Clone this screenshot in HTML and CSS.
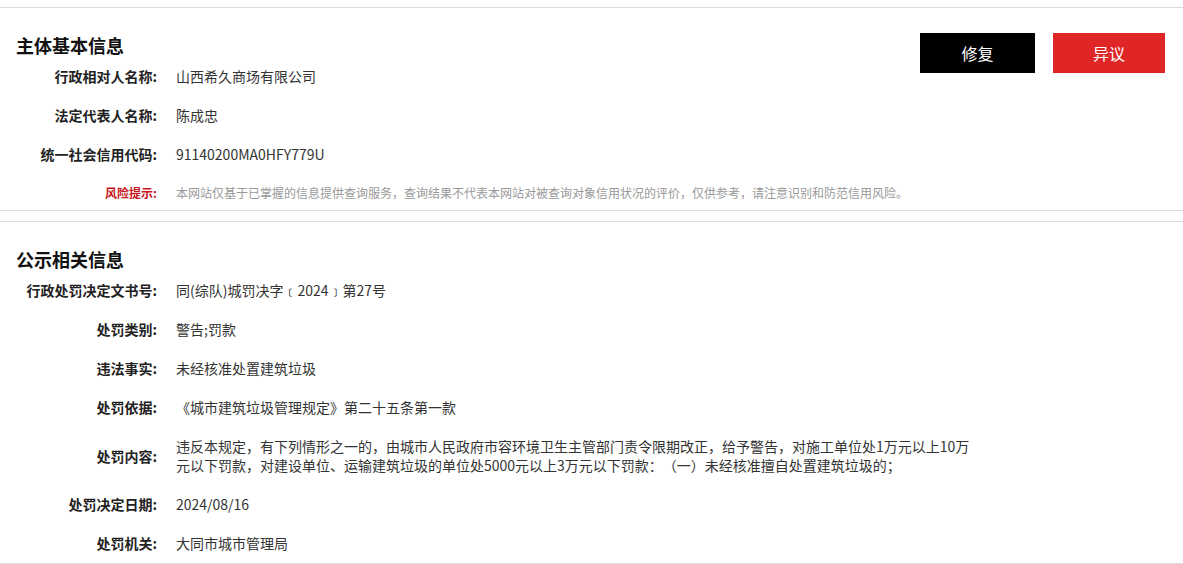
FILE: index.html
```html
<!DOCTYPE html>
<html lang="zh-CN">
<head>
<meta charset="utf-8">
<title>主体基本信息</title>
<link rel="stylesheet" href="styles.css">
</head>
<body>
<div class="page">
  <section class="section section-main">
    <div class="info">
      <h2 class="title">主体基本信息</h2>
      <div class="row"><div class="label">行政相对人名称:</div><div class="value">山西希久商场有限公司</div></div>
      <div class="row"><div class="label">法定代表人名称:</div><div class="value">陈成忠</div></div>
      <div class="row"><div class="label">统一社会信用代码:</div><div class="value">91140200MA0HFY779U</div></div>
      <div class="row row-risk"><div class="label label-risk">风险提示:</div><div class="value value-risk">本网站仅基于已掌握的信息提供查询服务，查询结果不代表本网站对被查询对象信用状况的评价，仅供参考，请注意识别和防范信用风险。</div></div>
    </div>
    <div class="actions">
      <button class="btn btn-dark">修复</button>
      <button class="btn btn-red">异议</button>
    </div>
  </section>
  <section class="section">
    <div class="info">
      <h2 class="title">公示相关信息</h2>
      <div class="row"><div class="label">行政处罚决定文书号:</div><div class="value">同(综队)城罚决字﹝2024﹞第27号</div></div>
      <div class="row"><div class="label">处罚类别:</div><div class="value">警告;罚款</div></div>
      <div class="row"><div class="label">违法事实:</div><div class="value">未经核准处置建筑垃圾</div></div>
      <div class="row"><div class="label">处罚依据:</div><div class="value">《城市建筑垃圾管理规定》第二十五条第一款</div></div>
      <div class="row"><div class="label">处罚内容:</div><div class="value">违反本规定，有下列情形之一的，由城市人民政府市容环境卫生主管部门责令限期改正，给予警告，对施工单位处1万元以上10万元以下罚款，对建设单位、运输建筑垃圾的单位处5000元以上3万元以下罚款：（一）未经核准擅自处置建筑垃圾的；</div></div>
      <div class="row"><div class="label">处罚决定日期:</div><div class="value">2024/08/16</div></div>
      <div class="row"><div class="label">处罚机关:</div><div class="value">大同市城市管理局</div></div>
    </div>
  </section>
</div>
</body>
</html>
```

FILE: styles.css
```css
* { box-sizing: border-box; }
html, body { margin: 0; padding: 0; background: #fff; }
body {
  font-family: "Noto Sans CJK SC", "Liberation Sans", sans-serif;
  color: #333;
  text-spacing-trim: space-all;
}
.page { padding-top: 7px; }
.section {
  border-top: 1px solid #dcdcdc;
  border-bottom: 1px solid #dcdcdc;
  padding: 0 18px 0 16px;
  display: flex;
  justify-content: space-between;
  align-items: flex-start;
}
.section + .section { margin-top: 10px; }
.info { flex: 1; }
.title {
  margin: 0;
  padding-top: 25px;
  font-size: 18px;
  line-height: 24px;
  font-weight: bold;
  color: #111;
}
.row {
  display: flex;
  align-items: center;
  padding: 10px 0;
  font-size: 14px;
  line-height: 19px;
}
.label {
  width: 141px;
  flex: none;
  text-align: right;
  font-weight: bold;
  color: #222;
}
.value {
  margin-left: 19px;
  max-width: 800px;
  color: #333;
}
.row-risk { padding: 9px 0 8px; font-size: 12px; }
.label-risk { color: #c8161d; font-weight: bold; }
.value-risk { color: #999; }
.actions {
  display: flex;
  gap: 18px;
  padding-top: 25px;
}
.btn {
  border: 0;
  height: 40px;
  font-family: inherit;
  font-size: 16px;
  color: #fff;
  cursor: pointer;
}
.btn-dark { width: 115px; background: #000; }
.btn-red { width: 112px; background: #e02527; }
```
